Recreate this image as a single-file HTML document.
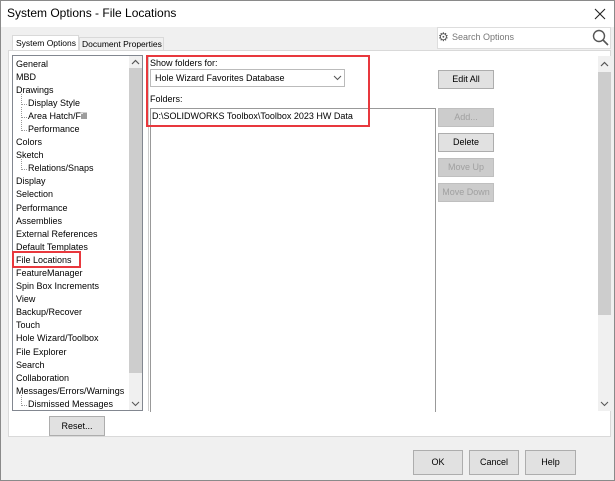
<!DOCTYPE html>
<html><head><style>
*{margin:0;padding:0;box-sizing:border-box}
body{width:615px;height:481px;background:#f0f0f0;font-family:"Liberation Sans",sans-serif;font-size:9px;color:#000;position:relative;overflow:hidden}
.a{position:absolute}
.btn{position:absolute;background:#e1e1e1;border:1px solid #adadad;text-align:center;font-size:9px}
.dis{color:#a0a0a0;background:#cccccc;border-color:#bfbfbf}
.tree div{height:13.1px;line-height:13px;white-space:nowrap}
.sub{padding-left:12px;position:relative}
.sub:before{content:"";position:absolute;left:5px;top:-3px;height:10px;width:5px;border-left:1px dotted #999;border-bottom:1px dotted #999}
</style></head><body>
<div class="a" style="left:0;top:0;width:615px;height:481px;border:1px solid #8a8a8a"></div>
<div class="a" style="left:1px;top:1px;width:613px;height:26px;background:#fff"></div>
<div class="a" style="left:7px;top:6px;font-size:12px">System Options - File Locations</div>
<svg class="a" style="left:594px;top:8px" width="12" height="12"><path d="M1 1L11 11M11 1L1 11" stroke="#222" stroke-width="1.1"/></svg>
<!-- search -->
<div class="a" style="left:437px;top:27px;width:174px;height:22px;background:#fff;border:1px solid #ddd"></div>
<div class="a" style="left:438px;top:30px;font-size:12px;color:#555">⚙</div>
<div class="a" style="left:452px;top:32px;color:#777">Search Options</div>
<svg class="a" style="left:592px;top:28px" width="18" height="20"><circle cx="7" cy="8" r="5.5" fill="none" stroke="#555" stroke-width="1.4"/><line x1="11" y1="12" x2="16" y2="17" stroke="#555" stroke-width="1.6"/></svg>
<!-- tabs -->
<div class="a" style="left:12px;top:35px;width:67px;height:16px;background:#fff;border:1px solid #d9d9d9;border-bottom:none"></div>
<div class="a" style="left:16px;top:38px;font-size:8.5px">System Options</div>
<div class="a" style="left:79px;top:37px;width:85px;height:14px;background:#f0f0f0;border:1px solid #d9d9d9;border-bottom:none"></div>
<div class="a" style="left:82px;top:39px;font-size:8.5px">Document Properties</div>
<div class="a" style="left:8px;top:50px;width:603px;height:387px;background:#fff;border:1px solid #d9d9d9"></div>
<!-- tree -->
<div class="a" style="left:12px;top:55px;width:131px;height:356px;border:1px solid #828790;background:#fff"></div>
<div class="a tree" style="left:16px;top:57.5px">
<div>General</div><div>MBD</div><div>Drawings</div><div class="sub">Display Style</div><div class="sub">Area Hatch/Fill</div><div class="sub">Performance</div><div>Colors</div><div>Sketch</div><div class="sub">Relations/Snaps</div><div>Display</div><div>Selection</div><div>Performance</div><div>Assemblies</div><div>External References</div><div>Default Templates</div><div>File Locations</div><div>FeatureManager</div><div>Spin Box Increments</div><div>View</div><div>Backup/Recover</div><div>Touch</div><div>Hole Wizard/Toolbox</div><div>File Explorer</div><div>Search</div><div>Collaboration</div><div>Messages/Errors/Warnings</div><div class="sub">Dismissed Messages</div>
</div>
<div class="a" style="left:129px;top:56px;width:13px;height:354px;background:#f0f0f0"></div>
<div class="a" style="left:129px;top:68px;width:13px;height:305px;background:#cdcdcd"></div>
<svg class="a" style="left:131px;top:59px" width="9" height="6"><path d="M1 5L4.5 1.5L8 5" fill="none" stroke="#555" stroke-width="1.2"/></svg>
<svg class="a" style="left:131px;top:401px" width="9" height="6"><path d="M1 1L4.5 4.5L8 1" fill="none" stroke="#555" stroke-width="1"/></svg>
<div class="a" style="left:12px;top:251px;width:69px;height:17px;border:2px solid #e8383d"></div>
<div class="btn" style="left:49px;top:416px;width:56px;height:20px;line-height:18px">Reset...</div>
<!-- right panel -->
<div class="a" style="left:148px;top:55px;width:464px;height:356px;border-left:1px solid #ccc"></div>
<div class="a" style="left:598px;top:56px;width:13px;height:355px;background:#f0f0f0"></div>
<div class="a" style="left:598px;top:72px;width:13px;height:243px;background:#cdcdcd"></div>
<svg class="a" style="left:600px;top:61px" width="9" height="6"><path d="M1 5L4.5 1.5L8 5" fill="none" stroke="#555" stroke-width="1.2"/></svg>
<svg class="a" style="left:600px;top:401px" width="9" height="6"><path d="M1 1L4.5 4.5L8 1" fill="none" stroke="#555" stroke-width="1"/></svg>
<div class="a" style="left:150px;top:58px">Show folders for:</div>
<div class="a" style="left:150px;top:69px;width:195px;height:18px;border:1px solid #bbb;background:#fff;padding:3px 0 0 4px">Hole Wizard Favorites Database</div>
<svg class="a" style="left:333px;top:75px" width="9" height="6"><path d="M1 1L4.5 4.5L8 1" fill="none" stroke="#555" stroke-width="1"/></svg>
<div class="a" style="left:150px;top:94px">Folders:</div>
<div class="a" style="left:150px;top:108px;width:286px;height:304px;border:1px solid #999;border-bottom:none;background:#fff"></div>
<div class="a" style="left:152px;top:111px">D:\SOLIDWORKS Toolbox\Toolbox 2023 HW Data</div>
<div class="a" style="left:146px;top:55px;width:224px;height:72px;border:2px solid #e8383d"></div>
<div class="btn" style="left:438px;top:70px;width:56px;height:19px;line-height:17px">Edit All</div>
<div class="btn dis" style="left:438px;top:108px;width:56px;height:19px;line-height:17px">Add...</div>
<div class="btn" style="left:438px;top:133px;width:56px;height:19px;line-height:17px">Delete</div>
<div class="btn dis" style="left:438px;top:158px;width:56px;height:19px;line-height:17px">Move Up</div>
<div class="btn dis" style="left:438px;top:183px;width:56px;height:19px;line-height:17px">Move Down</div>
<!-- bottom -->
<div class="btn" style="left:413px;top:450px;width:50px;height:25px;line-height:23px">OK</div>
<div class="btn" style="left:469px;top:450px;width:50px;height:25px;line-height:23px">Cancel</div>
<div class="btn" style="left:525px;top:450px;width:51px;height:25px;line-height:23px">Help</div>
</body></html>
